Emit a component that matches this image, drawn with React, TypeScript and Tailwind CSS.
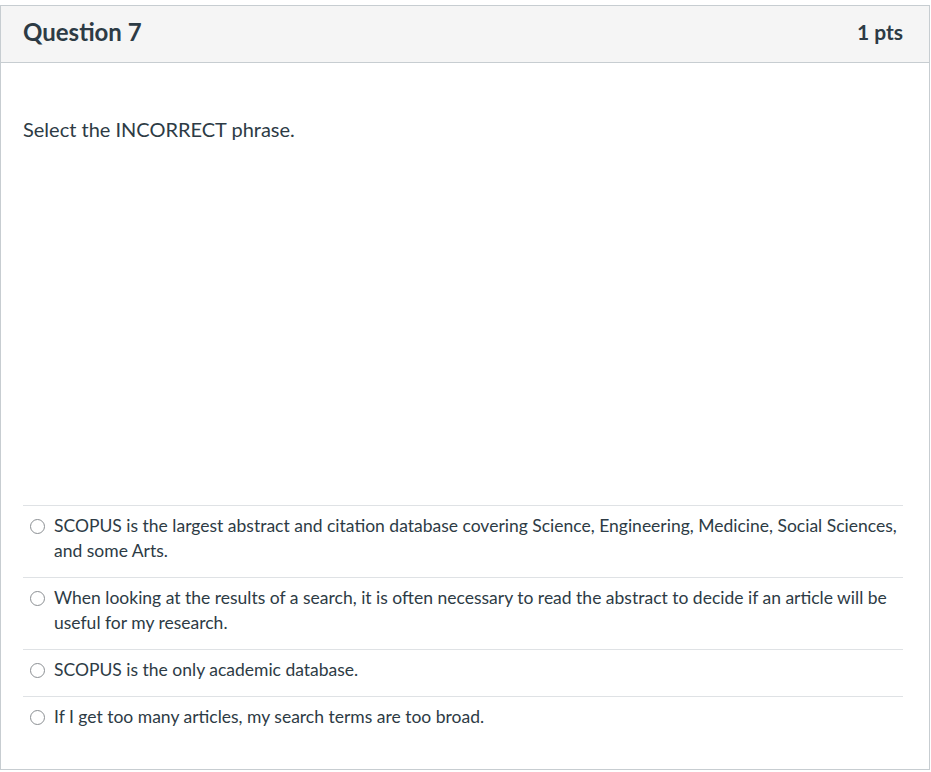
import React from "react";

const answers = [
  "SCOPUS is the largest abstract and citation database covering Science, Engineering, Medicine, Social Sciences, and some Arts.",
  "When looking at the results of a search, it is often necessary to read the abstract to decide if an article will be useful for my research.",
  "SCOPUS is the only academic database.",
  "If I get too many articles, my search terms are too broad.",
];

export default function App() {
  return (
    <div className="w-[931px] h-[772px] bg-white pt-[5px] font-['Lato','Liberation_Sans',sans-serif] text-[#2d3b45]">
      <div className="w-[930px] h-[765px] border border-[#c7cdd1] flex flex-col">
        <div className="h-[57px] bg-[#f5f5f5] border-b border-[#c7cdd1] flex items-center justify-between pl-[22px] pr-[26px] pb-[4px]">
          <h2 className="text-[24px] font-bold">Question 7</h2>
          <span className="text-[21px] font-bold">1 pts</span>
        </div>
        <div className="pl-[22px] pr-[26px] pt-[51px]">
          <p className="text-[20px]">Select the INCORRECT phrase.</p>
        </div>
        <div className="mt-[361px] ml-[22px] mr-[26px]">
          {answers.map((a) => (
            <label
              key={a}
              className="flex items-start gap-[9px] border-t border-[#dfe2e5] pt-[7px] pb-[14px] pl-[7px] text-[17.5px] leading-[25px]"
            >
              <span className="mt-[6px] w-[15px] h-[15px] shrink-0 rounded-full border border-[#8b8f93] bg-white" />
              <span>{a}</span>
            </label>
          ))}
        </div>
      </div>
    </div>
  );
}
